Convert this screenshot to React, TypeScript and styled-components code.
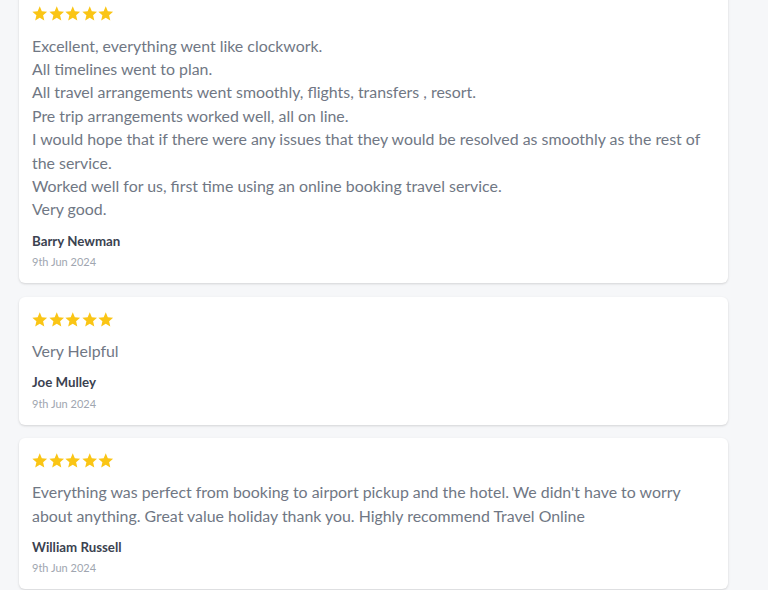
import * as React from "react"
import styled, { createGlobalStyle } from "styled-components"

const GlobalStyle = createGlobalStyle`
  html, body {
    margin: 0;
    padding: 0;
    background: #f6f7f9;
    font-family: Lato, "Noto Sans", sans-serif;
  }
`

const Page = styled.div`
  width: 768px;
  height: 590px;
  overflow: hidden;
  background: #f6f7f9;
`

const List = styled.div`
  display: flex;
  flex-direction: column;
  gap: 13.5px;
  width: 709px;
  margin: -8.5px 0 0 19px;
`

const Card = styled.article`
  background: #fff;
  border-radius: 6px;
  box-shadow: 0 1px 3px rgba(0, 0, 0, 0.1), 0 1px 2px rgba(0, 0, 0, 0.05);
  padding: 14px 19px 13px 13px;
`

const Stars = styled.div`
  display: flex;
  gap: 1px;
  height: 17px;
  align-items: center;
  margin-bottom: 11px;
`

const Body = styled.p`
  margin: 0;
  font-size: 15.9px;
  line-height: 23.4px;
  font-weight: 400;
  color: #707784;
  white-space: pre-line;
`

const Name = styled.div`
  margin-top: 11px;
  font-size: 13.3px;
  line-height: 18px;
  font-weight: 700;
  color: #3b4250;
`

const DateText = styled.div`
  margin-top: 4.5px;
  font-size: 11px;
  line-height: 16px;
  color: #a0a6b0;
`

const Star = () => (
  <svg width="15.5" height="15.5" viewBox="1.5 1.5 21 21">
    <path
      fill="#fac515"
      d="M12 17.27L18.18 21l-1.64-7.03L22 9.24l-7.19-.61L12 2 9.19 8.63 2 9.24l5.46 4.73L5.82 21z"
    />
  </svg>
)

type Review = { text: string; name: string; date: string }

const reviews: Review[] = [
  {
    text:
      "Excellent, everything went like clockwork.\nAll timelines went to plan.\nAll travel arrangements went smoothly, flights, transfers , resort.\nPre trip arrangements worked well, all on line.\nI would hope that if there were any issues that they would be resolved as smoothly as the rest of the service.\nWorked well for us, first time using an online booking travel service.\nVery good.",
    name: "Barry Newman",
    date: "9th Jun 2024",
  },
  { text: "Very Helpful", name: "Joe Mulley", date: "9th Jun 2024" },
  {
    text:
      "Everything was perfect from booking to airport pickup and the hotel. We didn't have to worry about anything. Great value holiday thank you. Highly recommend Travel Online",
    name: "William Russell",
    date: "9th Jun 2024",
  },
]

const App = () => (
  <Page>
    <GlobalStyle />
    <List>
      {reviews.map((r) => (
        <Card key={r.name}>
          <Stars>
            {[0, 1, 2, 3, 4].map((i) => (
              <Star key={i} />
            ))}
          </Stars>
          <Body>{r.text}</Body>
          <Name>{r.name}</Name>
          <DateText>{r.date}</DateText>
        </Card>
      ))}
    </List>
  </Page>
)

export default App
